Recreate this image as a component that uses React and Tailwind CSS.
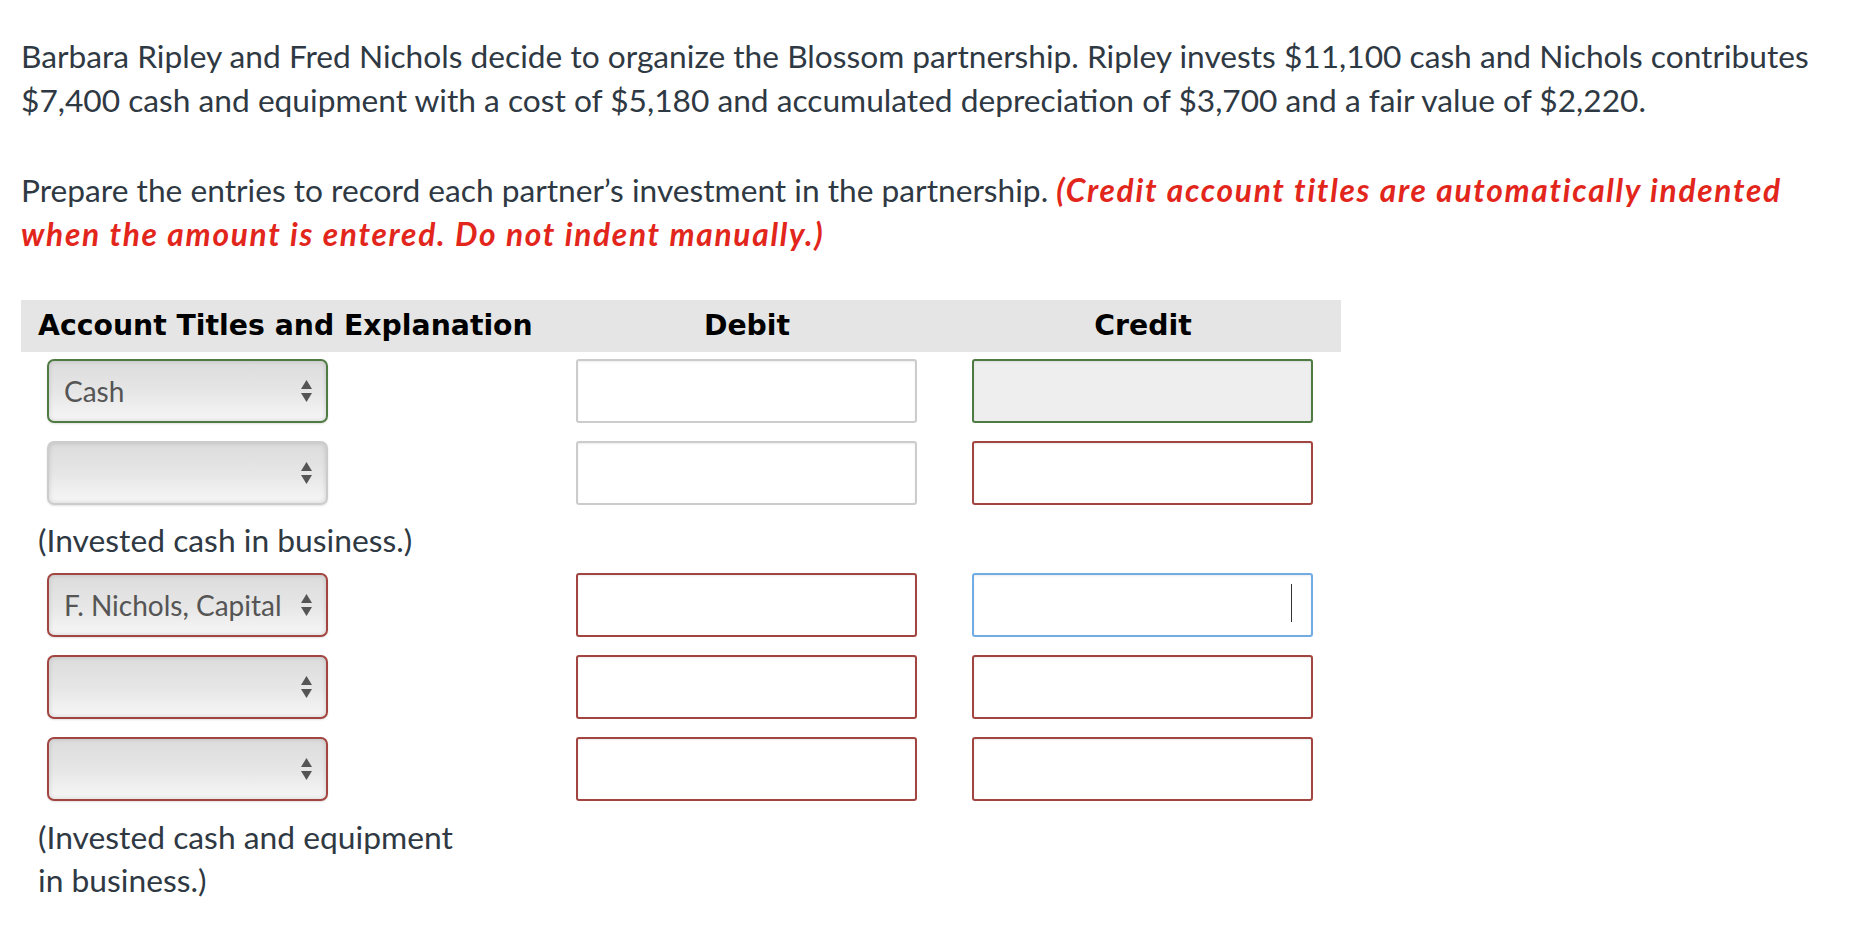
import React from 'react';

const borderTone = {
    gray: 'border-[#cccccc]',
    green: 'border-[#4e7b42]',
    red: 'border-[#a2443f]',
    blue: 'border-[#72ace4] shadow-[0_0_10px_rgba(102,170,233,0.7)]',
};

const SelectBox = ({ value, tone }) => (
    <div
        className={`relative flex items-center w-[281px] h-[64px] rounded-[7px] border-2 ${borderTone[tone]} bg-linear-to-b from-[#dcdcdc] via-[#e6e6e6] to-[#f6f6f6] shadow-[inset_0_0_5px_rgba(0,0,0,0.14),0_1px_2px_rgba(0,0,0,0.12)] pl-[15px] pr-[13px]`}
    >
        <span className="flex-1 text-[28px] text-[#555555] truncate">{value}</span>
        <svg width="13" height="24" viewBox="0 0 13 24" className="shrink-0">
            <path d="M6.5 1 L12 10 L1 10 Z" fill="#555555" />
            <path d="M1 14 L12 14 L6.5 23 Z" fill="#555555" />
        </svg>
    </div>
);

const AmountBox = ({ tone, filled, caret }) => (
    <div
        className={`relative w-[341px] h-[64px] rounded-[3px] border-2 ${borderTone[tone]} ${filled ? 'bg-[#eeeeee]' : 'bg-white'} shadow-[inset_0_1px_2px_rgba(0,0,0,0.08)]`}
    >
        {caret && <div className="absolute right-[19px] top-[9px] w-px h-[38px] bg-[#333333]"></div>}
    </div>
);

const rows1 = [
    { account: 'Cash', accTone: 'green', debit: 'gray', credit: 'green', creditFilled: true },
    { account: '', accTone: 'gray', debit: 'gray', credit: 'red' },
];

const rows2 = [
    { account: 'F. Nichols, Capital', accTone: 'red', debit: 'red', credit: 'blue', caret: true },
    { account: '', accTone: 'red', debit: 'red', credit: 'red' },
    { account: '', accTone: 'red', debit: 'red', credit: 'red' },
];

const EntryRow = ({ row }) => (
    <div className="grid grid-cols-[528px_396px_396px]">
        <div className="pl-[26px]">
            <SelectBox value={row.account} tone={row.accTone} />
        </div>
        <div className="pl-[27px]">
            <AmountBox tone={row.debit} />
        </div>
        <div className="pl-[27px]">
            <AmountBox tone={row.credit} filled={row.creditFilled} caret={row.caret} />
        </div>
    </div>
);

const App = () => {
    return (
        <div className="min-h-[940px] bg-white pt-[34px] pl-[21px] text-[#2f3943] font-['Lato','Liberation_Sans',sans-serif]">
            {/* Problem text */}
            <p className="text-[31.7px] leading-[44px] whitespace-nowrap">
                <span className="block">Barbara Ripley and Fred Nichols decide to organize the Blossom partnership. Ripley invests $11,100 cash and Nichols contributes</span>
                <span className="block">$7,400 cash and equipment with a cost of $5,180 and accumulated depreciation of $3,700 and a fair value of $2,220.</span>
            </p>

            <p className="mt-[46px] text-[31.7px] leading-[44px] whitespace-nowrap">
                <span className="block">
                    Prepare the entries to record each partner’s investment in the partnership.{' '}
                    <span className="font-bold italic tracking-[1.7px] text-[#e2261c]">(Credit account titles are automatically indented</span>
                </span>
                <span className="block font-bold italic tracking-[1.7px] text-[#e2261c]">when the amount is entered. Do not indent manually.)</span>
            </p>

            {/* Journal table */}
            <div className="mt-[44px] w-[1320px]">
                <div className="grid grid-cols-[528px_396px_396px] h-[52px] items-center bg-[#e5e5e5] text-black font-bold text-[28.3px] font-['DejaVu_Sans','Verdana',sans-serif]">
                    <div className="pl-[17px]">Account Titles and Explanation</div>
                    <div className="text-center">Debit</div>
                    <div className="text-center">Credit</div>
                </div>

                <div className="flex flex-col gap-[18px] pt-[7px]">
                    {rows1.map((row, i) => (
                        <EntryRow key={i} row={row} />
                    ))}
                </div>

                <p className="pl-[17px] pt-[13px] pb-[11px] text-[31.8px] leading-[44px]">(Invested cash in business.)</p>

                <div className="flex flex-col gap-[18px]">
                    {rows2.map((row, i) => (
                        <EntryRow key={i} row={row} />
                    ))}
                </div>

                <p className="pl-[17px] pt-[15px] text-[31.8px] leading-[43px]">
                    <span className="block">(Invested cash and equipment</span>
                    <span className="block">in business.)</span>
                </p>
            </div>
        </div>
    );
};

export default App;
